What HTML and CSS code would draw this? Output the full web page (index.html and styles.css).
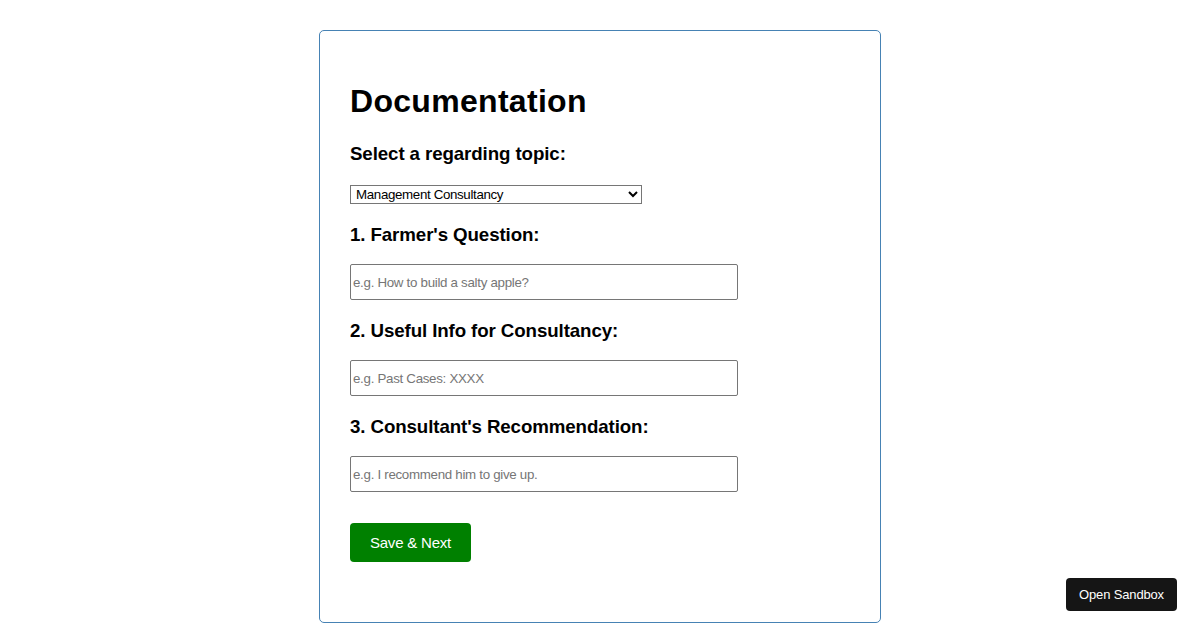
FILE: index.html
```html
<!DOCTYPE html>
<html>
<head>
<meta charset="utf-8">
<title>Documentation</title>
<link rel="stylesheet" href="styles.css">
</head>
<body>
<main class="card">
  <h1 class="title">Documentation</h1>
  <h3 class="label">Select a regarding topic:</h3>
  <div class="field field-select">
    <select class="topic">
      <option>Management Consultancy</option>
      <option>Crop Protection</option>
      <option>Soil and Fertilizer</option>
    </select>
  </div>
  <h3 class="label">1. Farmer's Question:</h3>
  <div class="field field-text">
    <input class="text-input" type="text" placeholder="e.g. How to build a salty apple?">
  </div>
  <h3 class="label">2. Useful Info for Consultancy:</h3>
  <div class="field field-text">
    <input class="text-input" type="text" placeholder="e.g. Past Cases: XXXX">
  </div>
  <h3 class="label">3. Consultant's Recommendation:</h3>
  <div class="field field-text">
    <input class="text-input" type="text" placeholder="e.g. I recommend him to give up.">
  </div>
  <div class="actions">
    <button class="save-btn" type="button">Save &amp; Next</button>
  </div>
</main>
<button class="sandbox-btn" type="button">Open Sandbox</button>
</body>
</html>
```
FILE: styles.css
```css
html, body {
  margin: 0;
  padding: 0;
  background: #ffffff;
}
body {
  font-family: "Liberation Sans", Arial, sans-serif;
  color: #000;
}
.card {
  display: block;
  width: 500px;
  margin: 30px auto 0;
  padding: 30px;
  border: 1px solid #4682b4;
  border-radius: 5px;
}
.title {
  font-size: 32px;
  font-weight: bold;
  letter-spacing: 0.3px;
  margin: 22px 0 23px;
}
.label {
  font-size: 18.72px;
  font-weight: bold;
  letter-spacing: -0.1px;
  margin: 20px 0 18px;
}
.field {
  line-height: normal;
}
.field-select {
  padding-top: 2px;
}
.field-text {
  margin-bottom: 1px;
}
.topic {
  width: 292px;
  height: 19px;
  font-family: "Liberation Sans", Arial, sans-serif;
  font-size: 13.33px;
  letter-spacing: -0.35px;
  color: #000;
  background: #fff;
  border: 1px solid #767676;
  border-radius: 0;
  padding: 0 1px;
  margin: 0;
}
.text-input {
  box-sizing: border-box;
  width: 388px;
  height: 36px;
  padding: 0 2px;
  margin: 0;
  font-family: "Liberation Sans", Arial, sans-serif;
  font-size: 13.33px;
  letter-spacing: -0.3px;
  border: 1px solid #767676;
  border-radius: 2px;
  color: #000;
}
.text-input::placeholder {
  color: #767676;
}
.actions {
  margin-top: 31px;
  padding-bottom: 30px;
}
.save-btn {
  background: #008000;
  color: #fff;
  border: none;
  border-radius: 4px;
  font-family: "Liberation Sans", Arial, sans-serif;
  font-size: 15px;
  letter-spacing: -0.2px;
  width: 121px;
  height: 39px;
  padding: 0;
  cursor: pointer;
}
.sandbox-btn {
  position: fixed;
  right: 23px;
  bottom: 19px;
  width: 111px;
  height: 33px;
  background: #151515;
  color: #fff;
  border: none;
  border-radius: 4px;
  font-family: "Liberation Sans", Arial, sans-serif;
  font-size: 13px;
  letter-spacing: -0.15px;
  padding: 0;
}
```
